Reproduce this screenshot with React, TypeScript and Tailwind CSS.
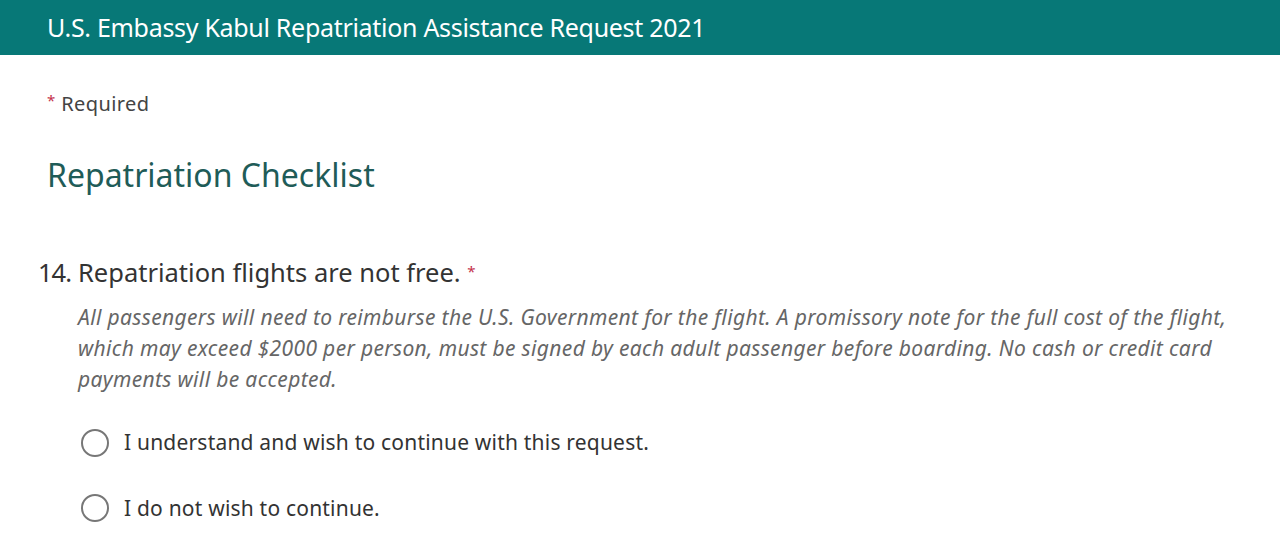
const options = [
  "I understand and wish to continue with this request.",
  "I do not wish to continue.",
];

// little raised asterisk used for required marks
const Req = () => (
  <span className="relative -top-[5px] text-[15px] text-[#c4314b]">*</span>
);

export default function App() {
  return (
    <div className="h-[552px] w-[1280px] overflow-hidden bg-white font-['Noto_Sans',sans-serif]">
      <header className="flex h-[55px] items-center bg-[#077877] pl-[47px]">
        <h1 className="text-[25px] tracking-[-0.3px] text-white">
          U.S. Embassy Kabul Repatriation Assistance Request 2021
        </h1>
      </header>

      <div className="pl-[47px] pt-[34px]">
        <p className="text-[20px] tracking-[0.4px] text-[#444]">
          <Req /> Required
        </p>
        <h2 className="mt-[36px] text-[32px] leading-[40px] text-[#1f5c58]">
          Repatriation Checklist
        </h2>
      </div>

      <section className="mt-[61px] pl-[38px] pr-[30px]">
        <div className="flex items-baseline text-[25.5px] leading-[32px] text-[#333]">
          <span className="w-[40px] shrink-0 tracking-[-1px]">14.</span>
          <span>
            Repatriation flights are not free. <Req />
          </span>
        </div>
        <p className="mt-[10px] pl-[40px] text-[21px] leading-[31px] tracking-[0.35px] italic text-[#666]">
          All passengers will need to reimburse the U.S. Government for the
          flight. A promissory note for the full cost of the flight, which may
          exceed $2000 per person, must be signed by each adult passenger
          before boarding. No cash or credit card payments will be accepted.
        </p>

        <div className="mt-[32px] flex flex-col gap-[34px] pl-[43px]">
          {options.map((label) => (
            <label key={label} className="flex items-center gap-[15px]">
              <span className="h-[28px] w-[28px] rounded-full border-2 border-[#777]" />
              <span className="text-[21px] tracking-[0.2px] text-[#333]">{label}</span>
            </label>
          ))}
        </div>
      </section>
    </div>
  );
}
